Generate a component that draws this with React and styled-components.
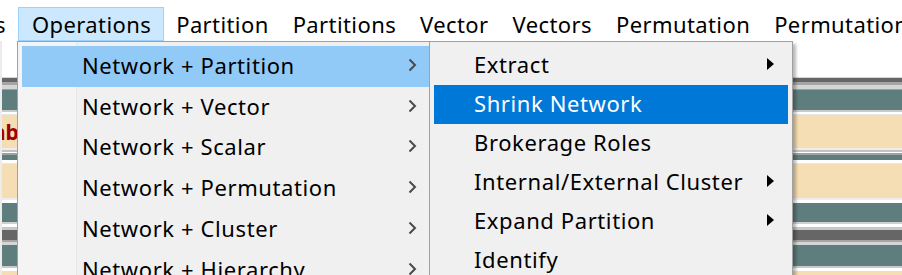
import { createGlobalStyle, styled } from "styled-components";

const GlobalStyle = createGlobalStyle`
  html, body {
    margin: 0;
    padding: 0;
    background: #fff;
  }
  body {
    font-family: "Noto Sans", "Open Sans", "DejaVu Sans", sans-serif;
    color: #000;
  }
`;

const Screen = styled.div`
  position: relative;
  width: 902px;
  height: 275px;
  overflow: hidden;
  background: #fff;
`;

const MenuBar = styled.div`
  display: flex;
  align-items: flex-end;
  height: 41px;
  overflow: hidden;
  background: #fff;
  font-size: 22px;
  letter-spacing: 0.4px;
  white-space: nowrap;
`;

const Clipped = styled.div`
  flex: none;
  width: 18px;
  height: 34px;
  display: flex;
  justify-content: flex-end;
  overflow: hidden;
`;

const BarItem = styled.div`
  flex: none;
  display: flex;
  align-items: center;
  height: 34px;
  box-sizing: border-box;
  padding: 0 ${p => p.$pr}px 1px ${p => p.$pl}px;
  border: 1px solid ${p => (p.$open ? "#99d1ff" : "transparent")};
  background: ${p => (p.$open ? "#cce8ff" : "transparent")};
`;

const Workspace = styled.div`
  display: flex;
  flex-direction: column;
  border-left: 2px solid #ececec;
`;

const Stripe = styled.div`
  flex: none;
  height: ${p => p.$h}px;
  background: ${p => p.$c};
`;

const LabelStripe = styled(Stripe)`
  display: flex;
  align-items: center;
  color: #a00000;
  font-weight: bold;
  font-size: 21px;
  text-indent: -9px;
  overflow: hidden;
`;

const Menu = styled.div`
  position: absolute;
  top: ${p => p.$top}px;
  left: ${p => p.$left}px;
  width: ${p => p.$width}px;
  box-sizing: border-box;
  padding: 4px;
  border: 1px solid #a0a0a0;
  background: #f0f0f0;
  font-size: 22px;
  letter-spacing: 0.6px;
  white-space: nowrap;
  box-shadow: ${p => p.$shadow ? "3px 3px 3px rgba(0,0,0,0.28)" : "none"};
`;

const GutterMenu = styled(Menu)`
  background: linear-gradient(to right, #f4f4f4 0, #f4f4f4 58px, #e8e8e8 58px, #e8e8e8 59px, #f0f0f0 59px);
`;

const Item = styled.div`
  display: flex;
  align-items: center;
  height: ${p => p.$h}px;
  box-sizing: border-box;
  padding: 0 ${p => p.$right}px 3px ${p => p.$left}px;
  background: ${p => p.$bg || "transparent"};
  color: ${p => p.$fg || "#000"};
`;

const ItemLabel = styled.span`
  flex: 1;
`;

const Chevron = () => (
  <svg width="9" height="14" viewBox="0 0 9 14">
    <polyline points="1.5,1.5 7,7 1.5,12.5" fill="none" stroke="#4a4a4a" strokeWidth="2" />
  </svg>
);

const Triangle = () => (
  <svg width="8" height="12" viewBox="0 0 8 12">
    <polygon points="0,0 7,6 0,12" fill="#000" />
  </svg>
);

const stripes = [
  [36, "#fff"],
  [1, "#d4d4d4"],
  [4, "#666"],
  [3, "#a5a5a5"],
  [4, "#d6d6d6"],
  [1, "#8fa3a3"],
  [20, "#5e7d7d"],
  [2, "#c9c9c9"],
  [2, "#fff"],
  [1, "#e6e6e6"],
];

const stripes2 = [
  [2, "#ededed"],
  [2, "#c2c2c2"],
  [1, "#fff"],
  [2, "#a0a0a0"],
  [5, "#5e7d7d"],
  [3, "#fff"],
  [1, "#e6e6e6"],
  [34, "#f5deb3"],
  [2, "#ededed"],
  [3, "#fff"],
  [19, "#5e7d7d"],
  [2, "#d0d0d0"],
  [3, "#fff"],
  [3, "#c8c8c8"],
  [10, "#666"],
  [2, "#a5a5a5"],
  [3, "#d6d6d6"],
  [21, "#5e7d7d"],
  [2, "#c9c9c9"],
  [3, "#fff"],
  [10, "#f5deb3"],
];

const barItems = ["Partition", "Partitions", "Vector", "Vectors", "Permutation", "Permutation"];

const opsItems = [
  "Network + Partition",
  "Network + Vector",
  "Network + Scalar",
  "Network + Permutation",
  "Network + Cluster",
  "Network + Hierarchy",
];

const subItems = [
  { label: "Extract", more: true },
  { label: "Shrink Network", active: true },
  { label: "Brokerage Roles" },
  { label: "Internal/External Cluster", more: true },
  { label: "Expand Partition", more: true },
  { label: "Identify" },
];

export default function App() {
  return (
    <Screen>
      <GlobalStyle />
      <MenuBar>
        <Clipped>
          <BarItem $pl={11} $pr={11}>Tools</BarItem>
        </Clipped>
        <BarItem $open $pl={13} $pr={12}>Operations</BarItem>
        {barItems.map((t, i) => (
          <BarItem key={i} $pl={11} $pr={11}>{t}</BarItem>
        ))}
      </MenuBar>
      <Workspace>
        {stripes.map(([h, c], i) => (
          <Stripe key={i} $h={h} $c={c} />
        ))}
        <LabelStripe $h={33} $c="#f5deb3">ab</LabelStripe>
        {stripes2.map(([h, c], i) => (
          <Stripe key={i} $h={h} $c={c} />
        ))}
      </Workspace>

      <GutterMenu $top={41} $left={17} $width={420}>
        {opsItems.map((t, i) => (
          <Item key={t} $h={40.8} $left={60} $right={15} $bg={i === 0 ? "#91c9f7" : undefined}>
            <ItemLabel>{t}</ItemLabel>
            <Chevron />
          </Item>
        ))}
      </GutterMenu>

      <Menu $top={41} $left={429} $width={364} $shadow>
        {subItems.map(s => (
          <Item
            key={s.label}
            $h={39}
            $left={40}
            $right={13}
            $bg={s.active ? "#0078d7" : undefined}
            $fg={s.active ? "#fff" : undefined}
          >
            <ItemLabel>{s.label}</ItemLabel>
            {s.more && <Triangle />}
          </Item>
        ))}
      </Menu>
    </Screen>
  );
}
